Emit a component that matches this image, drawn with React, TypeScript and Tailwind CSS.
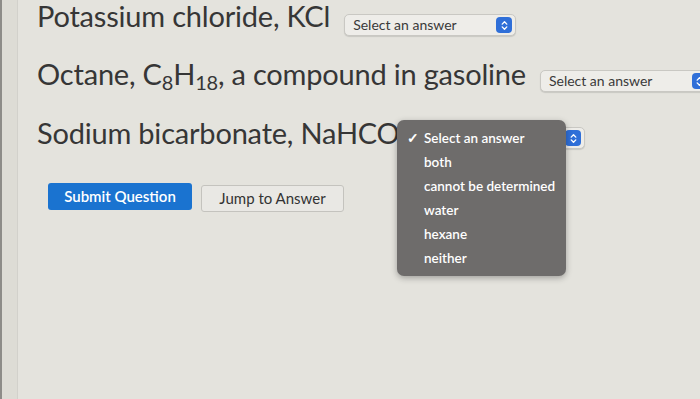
import { ChevronsUpDown } from "lucide-react";

const OPTIONS = ["both", "cannot be determined", "water", "hexane", "neither"];

const SelectBox = ({ className }: { className: string }) => (
  <div
    className={`flex h-[22px] shrink-0 items-center justify-between rounded-[5px] border border-[#c9c8c3] bg-[#eeede9] pl-[8px] pr-[3px] shadow-[0_1px_1px_rgba(0,0,0,0.12)] ${className}`}
  >
    <span className="whitespace-nowrap text-[14px] leading-none text-[#3a3a3a]">Select an answer</span>
    <span className="flex h-[16px] w-[16px] items-center justify-center rounded-[4px] bg-[#2f6fd8]">
      <ChevronsUpDown className="h-[11px] w-[11px] text-white" strokeWidth={3} />
    </span>
  </div>
);

export default function App() {
  return (
    <div className="h-[399px] w-[700px] overflow-hidden bg-[#e4e3dd] font-['Lato',sans-serif] text-[#363636]">
      <div className="flex h-full border-l-[2px] border-[#8d8c88]">
        <div className="w-[16px] shrink-0 border-r border-[#d2d1cb] bg-[#dddcd5]" />
        <div className="flex min-w-0 flex-1 flex-col pl-[19px]">
          <div className="flex h-[58px] items-start gap-[14px]">
            <span className="mt-[0px] whitespace-nowrap text-[29px] leading-[32px] tracking-[-0.2px]">
              Potassium chloride, KCl
            </span>
            <SelectBox className="mt-[14px] w-[172px]" />
          </div>

          <div className="flex h-[58px] items-start gap-[14px]">
            <span className="mt-[-1px] whitespace-nowrap text-[29px] leading-[34px] tracking-[-0.2px]">
              Octane, C<sub className="text-[20px] leading-none">8</sub>H
              <sub className="text-[20px] leading-none">18</sub>, a compound in gasoline
            </span>
            <SelectBox className="mt-[12px] w-[172px]" />
          </div>

          <div className="relative flex h-[58px] items-start gap-[2px]">
            <span className="mt-[0px] whitespace-nowrap text-[29px] leading-[34px] tracking-[-0.2px]">
              Sodium bicarbonate, NaHCO<sub className="text-[20px] leading-none">3</sub>
            </span>
            <SelectBox className="mt-[11px] w-[172px]" />
            <div className="absolute left-[360px] top-[4px] w-[169px] rounded-[7px] bg-[#6e6c6b] pb-[6px] pt-[6px] text-[13.5px] font-semibold text-white shadow-[0_2px_6px_rgba(0,0,0,0.3)]">
              <div className="flex h-[24px] items-center pl-[10px]">
                <span className="w-[17px]">✓</span>
                <span>Select an answer</span>
              </div>
              {OPTIONS.map((o) => (
                <div key={o} className="flex h-[24px] items-center pl-[27px]">
                  {o}
                </div>
              ))}
            </div>
          </div>

          <div className="flex items-start gap-[9px] pl-[11px]">
            <button className="mt-[9px] h-[27px] w-[144px] rounded-[3px] bg-[#1a73d0] text-[15px] font-semibold text-white">
              Submit Question
            </button>
            <button className="mt-[11px] h-[27px] w-[143px] rounded-[3px] border border-[#c4c3be] bg-[#e9e8e4] text-[15px] text-[#333]">
              Jump to Answer
            </button>
          </div>
        </div>
      </div>
    </div>
  );
}
